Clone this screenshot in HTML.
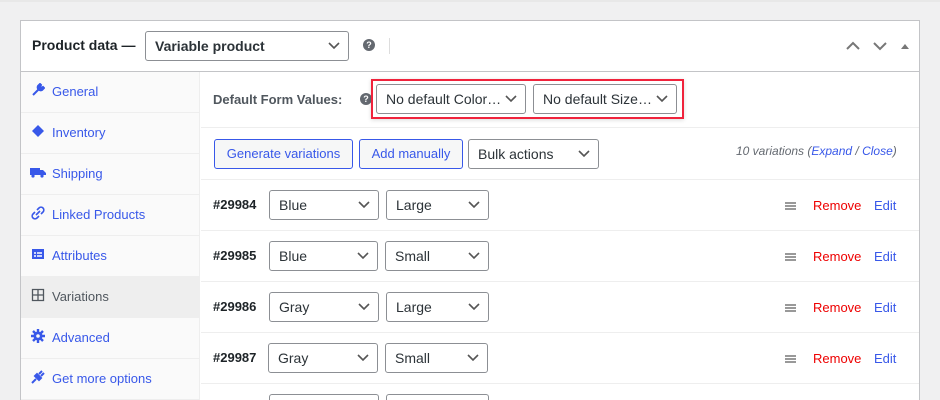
<!DOCTYPE html>
<html><head><style>
*{box-sizing:border-box;margin:0;padding:0}
html,body{width:940px;height:400px;overflow:hidden}
body{background:#f0f0f1;font-family:"Liberation Sans",sans-serif;font-size:13px;color:#1d2327;position:relative}
.a{position:absolute}
.panel{left:20px;top:20px;width:900px;height:380px;background:#fff;border:1px solid #c3c4c7;border-bottom:none}
.sel{position:absolute;border:1px solid #8c8f94;border-radius:3px;background:#fff;height:30px;line-height:28px;padding-left:9px;font-size:14px;color:#2c3338}
.sel svg{position:absolute;right:8px;top:10px}
.btn{position:absolute;border:1px solid #3858e9;border-radius:3px;background:#f6f7f7;color:#3858e9;height:30px;line-height:28px;text-align:center;font-size:13px}
.side{left:21px;top:72px;width:179px;height:328px;background:#fafafa;border-right:1px solid #eee}
.item{position:absolute;left:21px;width:179px;height:41px;border-bottom:1px solid #eee;color:#3858e9;line-height:40px;padding-left:31px}
.item span{position:absolute;left:9px;top:0;width:16px;text-align:center;font-size:14px;font-weight:bold}
.hr{position:absolute;left:201px;width:718px;height:1px;background:#eee}
.num{position:absolute;left:213px;font-weight:bold;font-size:13px}
.rm{position:absolute;left:813px;color:#e00;font-size:13px}
.ed{position:absolute;left:874px;color:#3858e9;font-size:13px}
.drag{position:absolute;left:785px;width:11px;height:8px;border-top:2px solid #999;border-bottom:2px solid #999}
.drag:after{content:"";position:absolute;left:0;right:0;top:1px;height:2px;background:#999}
.q{position:absolute;width:12px;height:12px;border-radius:50%;background:#646970;color:#fff;font-size:9px;font-weight:bold;text-align:center;line-height:12px}
</style></head><body>
<div class="a" style="left:0;top:0;width:940px;height:2px;background:#e8e8e8"></div>
<div class="a panel"></div>
<div class="a" style="left:21px;top:71px;width:898px;height:1px;background:#c3c4c7"></div>
<div class="a" style="left:32px;top:37px;font-weight:bold;font-size:14px;color:#1d2327">Product data —</div>
<div class="sel" style="left:145px;top:31px;width:204px;font-size:14px;font-weight:bold;color:#2c3338">Variable product<svg width="12" height="8"><path d="M1 1l5 5 5-5" fill="none" stroke="#555" stroke-width="1.6"/></svg></div>
<div class="q" style="left:363px;top:39px">?</div>
<div class="a" style="left:389px;top:38px;width:1px;height:16px;background:#ddd"></div>
<svg class="a" style="left:846px;top:41px" width="70" height="10"><path d="M1 8l6-6 6 6M28 2l6 6 6-6" fill="none" stroke="#777" stroke-width="2"/><path d="M55 8l4-5 4 5z" fill="#777"/></svg>
<div class="a side"></div>
<div class="item" style="top:72px"><span><svg width="14" height="14"><path d="M2 12l6-6M7 3a3 3 0 0 0 4 4l2-2-1-1-2 1-1-1 1-2-1-1z" fill="#3858e9" stroke="#3858e9" stroke-width="2"/></svg></span>General</div>
<div class="item" style="top:113px"><span><svg width="14" height="14"><path d="M7 1l6 6-6 6-6-6z" fill="#3858e9"/></svg></span>Inventory</div>
<div class="item" style="top:154px"><span><svg width="16" height="14"><path d="M0 3h10v7H0zM10 5h3l3 3v2h-6z" fill="#3858e9"/><circle cx="3" cy="11" r="1.6" fill="#3858e9"/><circle cx="12" cy="11" r="1.6" fill="#3858e9"/></svg></span>Shipping</div>
<div class="item" style="top:195px"><span><svg width="14" height="14"><path d="M5 9l4-4M6 4l2-2a2.5 2.5 0 0 1 4 4l-2 2M8 10l-2 2a2.5 2.5 0 0 1-4-4l2-2" fill="none" stroke="#3858e9" stroke-width="1.6"/></svg></span>Linked Products</div>
<div class="item" style="top:236px"><span><svg width="14" height="14"><rect x="1" y="2" width="12" height="10" fill="#3858e9"/><path d="M3 6h2M3 9h2M6 6h5M6 9h5" stroke="#fff" stroke-width="1.4"/></svg></span>Attributes</div>
<div class="item" style="top:277px;background:#eee;color:#50575e"><span><svg width="14" height="14"><path d="M1.5 1.5h11v11h-11zM7 1.5v11M1.5 7h11" fill="none" stroke="#50575e" stroke-width="1.3"/></svg></span>Variations</div>
<div class="item" style="top:318px"><span><svg width="14" height="14"><circle cx="7" cy="7" r="4.5" fill="#3858e9"/><path d="M7 0v14M0 7h14M2 2l10 10M12 2L2 12" stroke="#3858e9" stroke-width="2.4"/><circle cx="7" cy="7" r="1.8" fill="#fafafa"/></svg></span>Advanced</div>
<div class="item" style="top:359px;height:41px"><span><svg width="14" height="14"><path d="M1 13l4-4M4 6l4 4 2-2-4-4zM8 4l3-3M10 6l3-3" stroke="#3858e9" stroke-width="2" fill="#3858e9"/></svg></span>Get more options</div>
<div class="a" style="left:213px;top:92px;font-weight:bold;color:#50575e;font-size:13px">Default Form Values:</div>
<div class="q" style="left:360px;top:93px">?</div>
<div class="a" style="left:371px;top:79px;width:313px;height:40px;border:2px solid #f0233c;box-shadow:0 1px 4px rgba(0,0,0,.15)"></div>
<div class="sel" style="left:376px;top:84px;width:150px">No default Color…<svg width="12" height="8"><path d="M1 1l5 5 5-5" fill="none" stroke="#555" stroke-width="1.6"/></svg></div>
<div class="sel" style="left:533px;top:84px;width:144px">No default Size…<svg width="12" height="8"><path d="M1 1l5 5 5-5" fill="none" stroke="#555" stroke-width="1.6"/></svg></div>
<div class="hr" style="top:127px"></div>
<div class="btn" style="left:214px;top:139px;width:139px">Generate variations</div>
<div class="btn" style="left:359px;top:139px;width:104px">Add manually</div>
<div class="sel" style="left:468px;top:139px;width:131px">Bulk actions<svg width="12" height="8"><path d="M1 1l5 5 5-5" fill="none" stroke="#555" stroke-width="1.6"/></svg></div>
<div class="a" style="left:736px;top:144px;font-style:italic;color:#646970;font-size:12px">10 variations (<span style="color:#3858e9">Expand</span> / <span style="color:#3858e9">Close</span>)</div>
<div class="hr" style="top:179px"></div>

<div class="num" style="top:197px">#29984</div>
<div class="sel" style="left:269px;top:190px;width:110px">Blue<svg width="12" height="8"><path d="M1 1l5 5 5-5" fill="none" stroke="#555" stroke-width="1.6"/></svg></div>
<div class="sel" style="left:386px;top:190px;width:103px">Large<svg width="12" height="8"><path d="M1 1l5 5 5-5" fill="none" stroke="#555" stroke-width="1.6"/></svg></div>
<div class="drag" style="top:202px"></div><div class="rm" style="top:198px">Remove</div><div class="ed" style="top:198px">Edit</div>
<div class="hr" style="top:230px"></div>

<div class="num" style="top:248px">#29985</div>
<div class="sel" style="left:269px;top:241px;width:109px">Blue<svg width="12" height="8"><path d="M1 1l5 5 5-5" fill="none" stroke="#555" stroke-width="1.6"/></svg></div>
<div class="sel" style="left:385px;top:241px;width:104px">Small<svg width="12" height="8"><path d="M1 1l5 5 5-5" fill="none" stroke="#555" stroke-width="1.6"/></svg></div>
<div class="drag" style="top:253px"></div><div class="rm" style="top:249px">Remove</div><div class="ed" style="top:249px">Edit</div>
<div class="hr" style="top:281px"></div>

<div class="num" style="top:299px">#29986</div>
<div class="sel" style="left:269px;top:292px;width:110px">Gray<svg width="12" height="8"><path d="M1 1l5 5 5-5" fill="none" stroke="#555" stroke-width="1.6"/></svg></div>
<div class="sel" style="left:386px;top:292px;width:103px">Large<svg width="12" height="8"><path d="M1 1l5 5 5-5" fill="none" stroke="#555" stroke-width="1.6"/></svg></div>
<div class="drag" style="top:304px"></div><div class="rm" style="top:300px">Remove</div><div class="ed" style="top:300px">Edit</div>
<div class="hr" style="top:332px"></div>

<div class="num" style="top:350px">#29987</div>
<div class="sel" style="left:268px;top:343px;width:110px">Gray<svg width="12" height="8"><path d="M1 1l5 5 5-5" fill="none" stroke="#555" stroke-width="1.6"/></svg></div>
<div class="sel" style="left:385px;top:343px;width:103px">Small<svg width="12" height="8"><path d="M1 1l5 5 5-5" fill="none" stroke="#555" stroke-width="1.6"/></svg></div>
<div class="drag" style="top:355px"></div><div class="rm" style="top:351px">Remove</div><div class="ed" style="top:351px">Edit</div>
<div class="hr" style="top:383px"></div>

<div class="sel" style="left:269px;top:394px;width:110px;height:6px;border-bottom:none;border-radius:3px 3px 0 0"></div>
<div class="sel" style="left:386px;top:394px;width:103px;height:6px;border-bottom:none;border-radius:3px 3px 0 0"></div>
</body></html>
